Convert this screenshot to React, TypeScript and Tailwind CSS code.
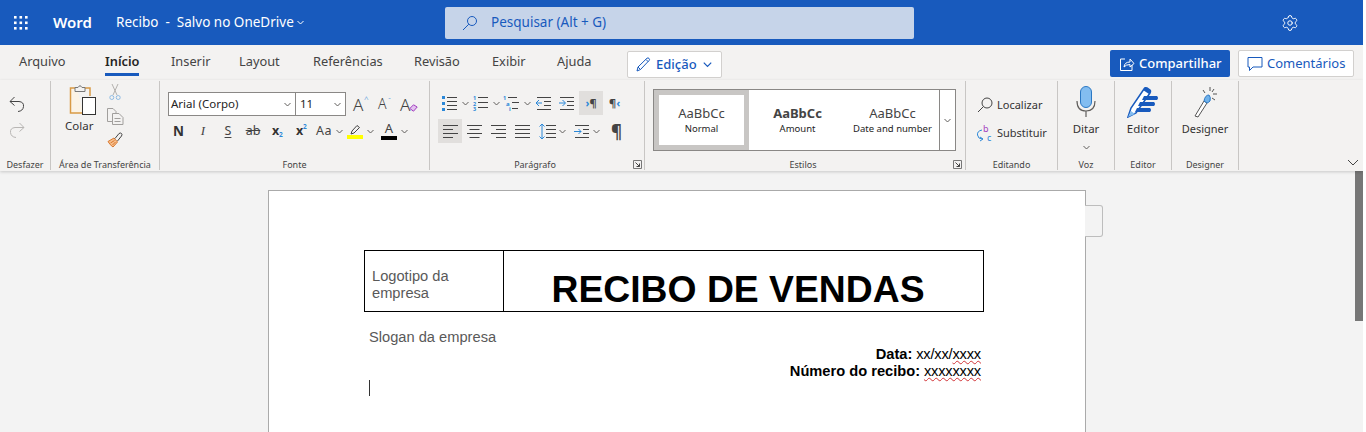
import React from "react";
import { Settings } from "lucide-react";

const UI = "[font-family:'Noto_Sans','Open_Sans',sans-serif]";

function Chev({ className = "", color = "#605e5c" }: { className?: string; color?: string }) {
  return (
    <svg width="7" height="5" viewBox="0 0 7 5" fill="none" className={`shrink-0 ${className}`}>
      <path d="M.5 1 3.5 4 6.5 1" stroke={color} strokeWidth="1" />
    </svg>
  );
}

function Lines({ kind, className = "" }: { kind: "l" | "c" | "r" | "j"; className?: string }) {
  const d = {
    l: "M0 1.5h15M0 5.5h10M0 9.5h15M0 13.5h10",
    c: "M0 1.5h15M2.5 5.5h10M0 9.5h15M2.5 13.5h10",
    r: "M0 1.5h15M5 5.5h10M0 9.5h15M5 13.5h10",
    j: "M0 1.5h15M0 5.5h15M0 9.5h15M0 13.5h15",
  }[kind];
  return (
    <svg width="15" height="15" viewBox="0 0 15 15" className={`shrink-0 ${className}`}>
      <path d={d} stroke="#444" strokeWidth="1" />
    </svg>
  );
}

function Launcher({ className = "" }: { className?: string }) {
  return (
    <svg width="9" height="9" viewBox="0 0 9 9" fill="none" className={className}>
      <path d="M.5 8.5V.5h8v8z" stroke="#777" />
      <path d="M2.5 2.5 6.5 6.5M6.5 3.5v3h-3" stroke="#444" />
    </svg>
  );
}

function Group({ w, label, children, labelClass = "" }: { w: string; label: string; children: React.ReactNode; labelClass?: string }) {
  return (
    <div className={`${w} shrink-0 flex flex-col relative`}>
      <div className="flex-1 min-h-0">{children}</div>
      <div className={`h-[13px] text-[9px] leading-[13px] text-[#444] text-center whitespace-nowrap ${labelClass}`}>{label}</div>
    </div>
  );
}

const Sep = () => <div className="w-px shrink-0 my-[1px] bg-[#c8c6c4]" />;

const Tab = ({ w, children, active }: { w: string; children: string; active?: boolean }) => (
  <div className={`${w} shrink-0 h-full flex items-start pt-[7px]`}>
    <span className={`text-[12.8px] leading-[18px] pb-[3px] border-b-[3px] ${active ? "font-semibold text-[#252423] border-[#185abd]" : "text-[#444] border-transparent"}`}>
      {children}
    </span>
  </div>
);

export default function App() {
  return (
    <div className="w-full h-[432px] overflow-hidden bg-white">
      <div className={`w-[1363px] h-[432px] overflow-hidden flex flex-col bg-[#f3f3f3] ${UI}`}>
        {/* title bar */}
        <header className="h-[45px] shrink-0 bg-[#185abd] flex items-center text-white relative">
          <svg width="16" height="16" viewBox="0 0 16 16" fill="#fff" className="ml-[13px] shrink-0">
            {[1, 6.5, 12].flatMap((y) => [1, 6.5, 12].map((x) => <rect key={`${x}-${y}`} x={x} y={y} width="2.6" height="2.6" />))}
          </svg>
          <span className="ml-[24px] w-[63px] text-[15px] font-semibold">Word</span>
          <span className="w-[178px] text-[13.5px] whitespace-pre">Recibo  -  Salvo no OneDrive</span>
          <Chev color="#fff" className="ml-[3px]" />
          <div className="ml-[141px] w-[469px] h-[32px] rounded-[2px] bg-[#c6d4e9] flex items-center pl-[17px] text-[#185abd]">
            <svg width="16" height="16" viewBox="0 0 16 16" fill="none" stroke="#185abd" strokeWidth="1">
              <circle cx="10" cy="6" r="4.5" />
              <path d="M6.8 9.2 1 15" />
            </svg>
            <span className="ml-[13px] text-[13.5px]">Pesquisar (Alt + G)</span>
          </div>
          <Settings size={18} strokeWidth={1.3} className="ml-[367px]" />
        </header>

        {/* tab row */}
        <div className="h-[35px] shrink-0 bg-[#f3f2f1] flex items-start pl-[19px]">
          <Tab w="w-[86px]">Arquivo</Tab>
          <Tab w="w-[66px]" active>Início</Tab>
          <Tab w="w-[68px]">Inserir</Tab>
          <Tab w="w-[74px]">Layout</Tab>
          <Tab w="w-[101px]">Referências</Tab>
          <Tab w="w-[78px]">Revisão</Tab>
          <Tab w="w-[65px]">Exibir</Tab>
          <Tab w="w-[70px]">Ajuda</Tab>
          <button className="mt-[6px] w-[95px] h-[27px] bg-white border border-[#d2d0ce] rounded-[2px] flex items-center pl-[8px] text-[#185abd]">
            <svg width="15" height="15" viewBox="0 0 15 15" fill="none" stroke="#185abd" strokeWidth="1">
              <path d="M1 14 2 10 11 1.2q1-.7 2 .2t.2 2L4.500 12.500z" />
              <path d="M10 2.500 12.300 4.800M2 10l2.500 2.500" />
            </svg>
            <span className="ml-[5px] text-[13px] font-medium">Edição</span>
            <Chev color="#185abd" className="ml-[7px] scale-125" />
          </button>
          <button className="ml-[388px] mt-[5px] w-[120px] h-[27px] bg-[#185abd] rounded-[2px] flex items-center pl-[9px] text-white">
            <svg width="16" height="16" viewBox="0 0 16 16" fill="none" stroke="#fff" strokeWidth="1">
              <path d="M6 3H1.500V14.500H13V9" />
              <path d="M5 11q.5-5 6-5V3l4 4.500-4 3.500V8.500q-4 0-6 2.500z" />
            </svg>
            <span className="ml-[4px] text-[13px] font-medium">Compartilhar</span>
          </button>
          <button className="ml-[8px] mt-[5px] w-[116px] h-[27px] bg-white border border-[#d2d0ce] rounded-[2px] flex items-center pl-[8px] text-[#185abd]">
            <svg width="16" height="16" viewBox="0 0 16 16" fill="none" stroke="#185abd" strokeWidth="1">
              <path d="M1 1.500H15V11H6L2.500 14.500V11H1z" />
            </svg>
            <span className="ml-[4px] text-[13px]">Comentários</span>
          </button>
        </div>

        {/* ribbon */}
        <div className="h-[91px] shrink-0 bg-[#f3f2f1] flex relative shadow-[0_1px_3px_rgba(0,0,0,0.18)]">
          <Group w="w-[50px]" label="Desfazer">
            <div className="flex flex-col pl-[9px] pt-[15px] gap-[9px]">
              <svg width="16" height="17" viewBox="0 0 16 17" fill="none" stroke="#444" strokeWidth="1">
                <path d="M1 6.500 5.500 2M1 6.500 5.500 10.500M1 6.500H10q5 .5 4.500 5T9 16.500" />
              </svg>
              <svg width="16" height="17" viewBox="0 0 16 17" fill="none" stroke="#b8b6b4" strokeWidth="1">
                <path d="M15 6.500 10.500 2M15 6.500 10.500 10.500M15 6.500H6Q1 7 1.500 11.500T7 16.500" />
              </svg>
            </div>
          </Group>
          <Sep />
          <Group w="w-[108px]" label="Área de Transferência">
            <div className="flex pt-[4px]">
              <div className="ml-[13px] w-[36px] flex flex-col items-start">
                <svg width="30" height="31" viewBox="0 0 30 31" fill="none" className="ml-[3px]">
                  <path d="M10 4H3.500V29H16" stroke="#d99a45" strokeWidth="1.500" fill="#fbf3e6" />
                  <path d="M16 4H23V12" stroke="#d99a45" strokeWidth="1.500" />
                  <path d="M8 6V3.500H11Q13 0 15 3.500H18V7.500H8z" stroke="#777" fill="#f3f2f1" />
                  <rect x="15.500" y="13.500" width="13" height="17" stroke="#333" fill="#fff" />
                </svg>
                <span className="ml-[1px] mt-[3px] text-[11.5px] text-[#333] leading-[16px]">Colar</span>
              </div>
              <div className="ml-[7px] flex flex-col items-center w-[16px] gap-[7px]">
                <svg width="12" height="17" viewBox="0 0 12 17" fill="none">
                  <path d="M3 0 8 11M9 0 4 11" stroke="#b3b0ad" />
                  <circle cx="2.800" cy="13.500" r="2" stroke="#90bce3" />
                  <circle cx="9.200" cy="13.500" r="2" stroke="#90bce3" />
                </svg>
                <svg width="17" height="17" viewBox="0 0 17 17" fill="none" stroke="#a19f9d">
                  <path d="M5.500 13.500H.5V.5H6L9 3.500V5" />
                  <path d="M5.500 5.500H12L16 9.500V16.500H5.500zM7.500 10.500h6M7.500 13.500h6" />
                </svg>
                <svg width="16" height="16" viewBox="0 0 16 16" fill="none">
                  <path d="M1 9.500 7 6l3.500 4L6 15Q3 13 1 9.500z" fill="#f7c08f" stroke="#d9782d" />
                  <path d="M3.500 11 7.500 8.500M5.500 13l3-3" stroke="#d9782d" />
                  <path d="M8 6.500 12 1.500q1.500-1 2.500 0t0 2.500L10.500 9" stroke="#444" />
                </svg>
              </div>
            </div>
          </Group>
          <Sep />
          <Group w="w-[269px]" label="Fonte">
            <div className="flex items-center pt-[12px] pl-[8px]">
              <div className="w-[128px] h-[24px] bg-white border border-[#8a8886] flex items-center pl-[2px] pr-[4px] justify-between">
                <span className="text-[11.5px] text-[#252423]">Arial (Corpo)</span>
                <Chev />
              </div>
              <div className="w-[51px] h-[24px] -ml-px bg-white border border-[#8a8886] flex items-center pl-[4px] pr-[4px] justify-between">
                <span className="text-[11.5px] text-[#252423]">11</span>
                <Chev />
              </div>
              <span className="ml-[7px] w-[16px] text-[17px] font-light leading-none text-[#444] relative">
                A<span className="absolute -top-[1px] left-[11px] text-[8px] text-[#2b88d8]">^</span>
              </span>
              <span className="ml-[9px] w-[16px] text-[14px] font-light leading-none text-[#444] relative">
                A<span className="absolute -top-[1px] left-[10px] text-[8px] text-[#2b88d8]">ˇ</span>
              </span>
              <span className="ml-[6px] w-[17px] text-[17px] font-light leading-none text-[#444] relative">
                A
                <svg width="9" height="8" viewBox="0 0 9 8" className="absolute left-[9px] top-[8px]">
                  <path d="M.8 4.500 4.500.8 8.200 3 4.500 7.200z" fill="#e3c3ef" stroke="#a33fbf" />
                </svg>
              </span>
            </div>
            <div className="flex items-center mt-[3px] h-[24px] text-[#333]">
              <span className="ml-[13px] w-[13px] text-[13.500px] font-bold">N</span>
              <span className="ml-[10px] w-[14px] text-center text-[13px] italic [font-family:'Liberation_Serif',serif] text-[#444]">I</span>
              <span className="ml-[11px] w-[14px] text-center text-[12.500px] underline underline-offset-2 text-[#444]">S</span>
              <span className="ml-[10px] w-[16px] text-center text-[12.500px] line-through text-[#444]">ab</span>
              <span className="ml-[11px] w-[14px] text-[12.500px] font-bold relative">x<span className="absolute left-[7px] top-[8px] text-[6.500px] text-[#2b88d8]">2</span></span>
              <span className="ml-[10px] w-[12px] text-[12.500px] font-bold relative">x<span className="absolute left-[7px] top-0 text-[6.500px] text-[#2b88d8]">2</span></span>
              <span className="ml-[8px] w-[17px] text-[12.500px] tracking-[0.5px] text-[#444]">Aa</span>
              <Chev className="ml-[3px]" />
              <svg width="16" height="15" viewBox="0 0 16 15" fill="none" className="ml-[4px]">
                <path d="M4 10 5 7 10 1.500l2.500 2L7 9z" stroke="#444" />
                <rect x="0" y="11" width="16" height="4" fill="#ffff00" />
              </svg>
              <Chev className="ml-[4px]" />
              <div className="ml-[7px] w-[16px] h-[20px] flex flex-col items-center">
                <span className="text-[13px] leading-[15px] text-[#444]">A</span>
                <span className="w-[16px] h-[4px] bg-black" />
              </div>
              <Chev className="ml-[4px]" />
            </div>
          </Group>
          <Sep />
          <Group w="w-[214px]" label="Parágrafo" labelClass="pr-[4px]">
            <div className="flex items-center pt-[11px] pl-[12px] h-[35px]">
              <svg width="15" height="15" viewBox="0 0 15 15">
                <path d="M0 0h3v3H0zM0 6h3v3H0zM0 12h3v3H0z" fill="#2b88d8" />
                <path d="M5 1.500h10M5 5.500h10M5 9.500h10M5 13.500h10" stroke="#444" />
              </svg>
              <Chev className="ml-[5px]" />
              <svg width="15" height="16" viewBox="0 0 15 16" className="ml-[4px] overflow-visible">
                <text x="0" y="5" fontSize="5.500" fill="#2b88d8" fontWeight="700">1</text>
                <text x="0" y="10.500" fontSize="5.500" fill="#2b88d8" fontWeight="700">2</text>
                <text x="0" y="16" fontSize="5.500" fill="#2b88d8" fontWeight="700">3</text>
                <path d="M5 2.500h10M5 7.500h10M5 12.500h10" stroke="#444" />
              </svg>
              <Chev className="ml-[5px]" />
              <svg width="16" height="16" viewBox="0 0 16 16" className="ml-[3px] overflow-visible">
                <text x="0" y="5" fontSize="5.500" fill="#2b88d8" fontWeight="700">1</text>
                <text x="3" y="10.500" fontSize="6" fill="#2b88d8" fontWeight="700">a</text>
                <text x="6" y="16" fontSize="5.500" fill="#2b88d8" fontWeight="700">i</text>
                <path d="M5 2.500h9M9 7.500h7M9 13.500h6" stroke="#444" />
              </svg>
              <Chev className="ml-[5px]" />
              <svg width="15" height="14" viewBox="0 0 15 14" className="ml-[5px]" fill="none">
                <path d="M0 7h6M3 4 0 7l3 3" stroke="#2b88d8" />
                <path d="M1 1.500h14M8 5.500h7M8 9.500h7M1 13.500h14" stroke="#444" />
              </svg>
              <svg width="15" height="14" viewBox="0 0 15 14" className="ml-[8px]" fill="none">
                <path d="M0 7h6M3.500 4 6.500 7l-3 3" stroke="#2b88d8" />
                <path d="M1 1.500h14M8 5.500h7M8 9.500h7M1 13.500h14" stroke="#444" />
              </svg>
              <span className="ml-[5px] w-[24px] h-[24px] bg-[#e1dfdd] flex items-center justify-center text-[11px] font-bold text-[#444]">
                <span className="text-[#2b88d8]">›</span>¶
              </span>
              <span className="ml-[6px] text-[11px] font-bold text-[#444]">
                ¶<span className="text-[#2b88d8]">‹</span>
              </span>
            </div>
            <div className="flex items-center pl-[8px] h-[24px] mt-[4px]">
              <span className="w-[24px] h-[24px] bg-[#e1dfdd] flex items-center justify-center">
                <Lines kind="l" />
              </span>
              <Lines kind="c" className="ml-[5px]" />
              <Lines kind="r" className="ml-[9px]" />
              <Lines kind="j" className="ml-[9px]" />
              <svg width="17" height="17" viewBox="0 0 17 17" className="ml-[9px]" fill="none">
                <path d="M3 1v15M.5 3.500 3 1l2.500 2.500M.5 13.500 3 16l2.500-2.500" stroke="#2b88d8" />
                <path d="M7 2.500h10M7 6.500h10M7 10.500h10M7 14.500h10" stroke="#444" />
              </svg>
              <Chev className="ml-[3px]" />
              <svg width="15" height="15" viewBox="0 0 15 15" className="ml-[8px]" fill="none">
                <path d="M0 7.500h7M4.500 5l2.500 2.500L4.500 10" stroke="#2b88d8" />
                <path d="M1 1.500h14M9 5.500h6M9 9.500h6M1 13.500h14" stroke="#444" />
              </svg>
              <Chev className="ml-[4px]" />
              <span className="ml-[11px] text-[17px] leading-none font-bold text-[#444]">¶</span>
            </div>
          </Group>
          <Launcher className="absolute left-[633px] bottom-[2px]" />
          <Sep />
          <Group w="w-[320px]" label="Estilos" labelClass="pr-[4px]">
            <div className="ml-[8px] mt-[9px] w-[303px] h-[62px] border border-[#8a8886] bg-white flex">
              <div className="w-[95px] border-[5px] border-[#c8c6c4] flex flex-col items-center justify-center">
                <span className="text-[13px] leading-[18px] text-[#444]">AaBbCc</span>
                <span className="text-[9.500px] leading-[14px] text-[#252423]">Normal</span>
              </div>
              <div className="w-[97px] flex flex-col items-center justify-center">
                <span className="text-[13px] leading-[18px] font-bold text-[#444]">AaBbCc</span>
                <span className="text-[9.500px] leading-[14px] text-[#252423]">Amount</span>
              </div>
              <div className="w-[93px] flex flex-col items-center justify-center">
                <span className="text-[13px] leading-[18px] text-[#444]">AaBbCc</span>
                <span className="text-[9.500px] leading-[14px] text-[#252423] whitespace-nowrap">Date and number</span>
              </div>
              <div className="flex-1 border-l border-[#8a8886] flex items-center justify-center">
                <Chev />
              </div>
            </div>
          </Group>
          <Launcher className="absolute left-[953px] bottom-[2px]" />
          <Sep />
          <Group w="w-[91px]" label="Editando">
            <div className="pl-[11px] pt-[15px]">
              <div className="flex items-center h-[20px]">
                <svg width="16" height="16" viewBox="0 0 16 16" fill="none" stroke="#444">
                  <circle cx="10" cy="6" r="5" />
                  <path d="M6.500 9.500 1 15" />
                </svg>
                <span className="ml-[4px] text-[11px] text-[#333]">Localizar</span>
              </div>
              <div className="flex items-center h-[20px] mt-[8px]">
                <svg width="16" height="17" viewBox="0 0 16 17" fill="none" className="overflow-visible">
                  <text x="6" y="7" fontSize="9" fill="#a33fbf">b</text>
                  <text x="10" y="16" fontSize="9" fill="#2b88d8">c</text>
                  <path d="M5 5Q0 6 .5 10t5 4M3 12l3 2-3 2" stroke="#2b88d8" />
                </svg>
                <span className="ml-[4px] text-[11px] text-[#333]">Substituir</span>
              </div>
            </div>
          </Group>
          <Sep />
          <Group w="w-[56px]" label="Voz">
            <div className="flex flex-col items-center pt-[6px]">
              <svg width="20" height="32" viewBox="0 0 20 32" fill="none">
                <rect x="4.500" y=".5" width="11" height="21" rx="5.500" fill="#83bdf0" stroke="#2b78c4" />
                <path d="M1 15q0 10 9 10t9-10M10 25v6" stroke="#605e5c" strokeWidth="1.200" />
              </svg>
              <span className="mt-[3px] text-[11.500px] leading-[16px] text-[#333]">Ditar</span>
              <Chev className="mt-[8px]" />
            </div>
          </Group>
          <Sep />
          <Group w="w-[56px]" label="Editor">
            <div className="flex flex-col items-center pt-[6px]">
              <svg width="32" height="32" viewBox="0 0 32 32" fill="none">
                <path d="M1 31 4 22 17 3q1-2 3-1l3 2q1 1 0 3L9 27z" fill="#fff" stroke="#185abd" strokeWidth="1.500" />
                <path d="M17 3q1-2 3-1l3 2q1 1 0 3l-1 1-6-4z" fill="#185abd" />
                <path d="M17 10H30q2 2 0 4H15zM13 16H27q2 2 0 4H11zM10 22H23q2 2 0 4H8z" fill="#185abd" />
                <path d="M1 31 4 25l4 3z" fill="#83bdf0" />
              </svg>
              <span className="mt-[3px] text-[11.500px] leading-[16px] text-[#333]">Editor</span>
            </div>
          </Group>
          <Sep />
          <Group w="w-[66px]" label="Designer">
            <div className="flex flex-col items-center pt-[6px]">
              <svg width="24" height="32" viewBox="0 0 24 32" fill="none">
                <path d="M2 30 11 15l3 2-9 14z" fill="#fff" stroke="#555" />
                <path d="M11 15q1-6 5-6 2 2 1 6-2 2-3 2z" fill="#6fb1ea" stroke="#2b78c4" />
                <path d="M10 4l2 3M17 1v4M24 8h-4M22 14l-3-2M21 3l-2 3" stroke="#555" />
              </svg>
              <span className="mt-[3px] text-[11px] leading-[16px] text-[#333]">Designer</span>
            </div>
          </Group>
          <Sep />
          <svg width="12" height="7" viewBox="0 0 12 7" fill="none" className="absolute right-[4px] bottom-[5px]">
            <path d="M1 1 6 6l5-5" stroke="#444" />
          </svg>
        </div>

        {/* canvas */}
        <div className="flex-1 min-h-0 flex overflow-hidden">
          <div className="flex-1 min-w-0 pt-[19px] pl-[268px]">
            <div className="relative w-[818px] h-[300px] bg-white border border-[#aaaaaa] pl-[95px] pt-[59px] [font-family:'Liberation_Sans',Arial,sans-serif]">
              <div className="absolute left-[816px] top-[14px] w-[18px] h-[32px] border border-l-0 border-[#bdbdbd] rounded-r-[3px] bg-[#f3f3f3]" />
              <div className="w-[620px] h-[62px] border border-black flex">
                <div className="w-[139px] shrink-0 border-r border-black pl-[7px] pt-[17px] text-[14.670px] leading-[17px] text-[#595959]">
                  Logotipo da
                  <br />
                  empresa
                </div>
                <div className="flex-1 flex items-end justify-center pr-[11px] text-[37.300px] leading-[44px] font-bold text-black whitespace-nowrap">
                  RECIBO DE VENDAS
                </div>
              </div>
              <div className="w-[620px] pl-[5px] pr-[3px]">
                <div className="mt-[17px] text-[14.670px] leading-[17px] text-[#595959]">Slogan da empresa</div>
                <div className="text-right text-[14.670px] leading-[17px] tracking-[-0.2px] text-black">
                  <b className="tracking-normal">Data:</b> xx/xx/<span className="underline decoration-wavy decoration-[#d13438] decoration-1">xxxx</span>
                </div>
                <div className="text-right text-[14.670px] leading-[17px] tracking-[-0.2px] text-black">
                  <b className="tracking-normal">Número do recibo:</b> <span className="underline decoration-wavy decoration-[#d13438] decoration-1">xxxxxxxx</span>
                </div>
                <div className="w-px h-[16px] bg-[#333]" />
              </div>
            </div>
          </div>
          <div className="w-[8px] shrink-0">
            <div className="h-[150px] bg-[#767676]" />
          </div>
        </div>
      </div>
    </div>
  );
}
